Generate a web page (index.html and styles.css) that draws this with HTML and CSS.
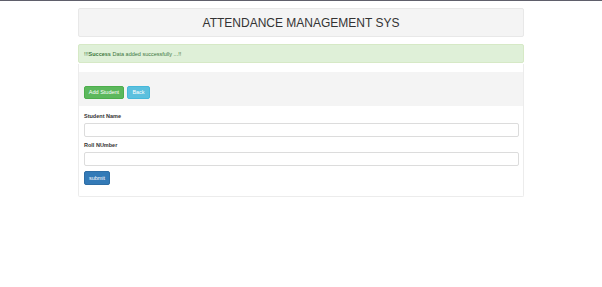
FILE: index.html
```html
<!DOCTYPE html>
<html>
<head>
  <title>Attendance Management System</title>
  <link rel="stylesheet" href="styles.css">
</head>
<body>
  <div class="topline"></div>
  <div class="container">
    <div class="well">
      <h2 class="title">ATTENDANCE MANAGEMENT SYS</h2>
    </div>

    <div class="alert">!!!<strong>Success</strong> Data added successfully ...!!</div>

    <div class="panel">
      <div class="panel-heading">
        <a class="btn btn-success" href="#">Add Student</a>
        <a class="btn btn-info" href="#">Back</a>
      </div>
      <div class="panel-body">
        <form>
          <div class="form-group">
            <label for="name">Student Name</label>
            <input type="text" class="form-control" id="name" name="name">
          </div>
          <div class="form-group">
            <label for="roll">Roll NUmber</label>
            <input type="text" class="form-control" id="roll" name="roll">
          </div>
          <button type="submit" class="btn btn-primary">submit</button>
        </form>
      </div>
    </div>
  </div>
</body>
</html>
```

FILE: styles.css
```css
body {
  font-family: "Liberation Sans", Arial, sans-serif;
  background-color: #fff;
  color: #333;
  margin: 0;
  padding: 0;
}

.topline {
  height: 1px;
  background-color: #5f5f6b;
}

.container {
  width: 446px;
  margin: 0 auto;
}

.well {
  margin-top: 7px;
  height: 27px;
  background-color: #f4f4f4;
  border: 1px solid #e8e8e8;
  border-radius: 2px;
  display: flex;
  align-items: center;
  justify-content: center;
}

.title {
  margin: 0;
  font-size: 12px;
  font-weight: normal;
  color: #333;
}

.alert {
  margin-top: 7px;
  height: 19px;
  box-sizing: border-box;
  padding: 0 5px;
  line-height: 19px;
  font-size: 5.5px;
  color: #3c763d;
  background-color: #dff0d8;
  border: 1px solid #d6e9c6;
  border-radius: 2px;
}

.panel {
  margin-top: 1px;
  border: 1px solid #ececec;
  border-top: none;
  border-radius: 0 0 2px 2px;
  padding-top: 8px;
  height: 124px;
}

.panel-heading {
  background-color: #f4f4f4;
  height: 34px;
  padding: 14px 5px 0;
  box-sizing: border-box;
  display: flex;
  gap: 3px;
}

.panel-body {
  padding: 7px 5px 0;
}

.btn {
  display: block;
  box-sizing: border-box;
  height: 13px;
  line-height: 11px;
  padding: 0;
  white-space: nowrap;
  text-align: center;
  font-family: "Liberation Sans", Arial, sans-serif;
  font-size: 5.5px;
  color: #fff;
  text-decoration: none;
  border: 1px solid transparent;
  border-radius: 2px;
}

.btn-success {
  background-color: #5cb85c;
  border-color: #4cae4c;
  width: 40px;
}

.btn-info {
  background-color: #5bc0de;
  border-color: #46b8da;
  width: 23px;
}

.btn-primary {
  background-color: #337ab7;
  border-color: #2e6da4;
  width: 26px;
  height: 14px;
  line-height: 12px;
}

.form-group {
  margin-bottom: 5px;
}

.form-group label {
  display: block;
  font-size: 5.5px;
  font-weight: bold;
  color: #333;
  margin-bottom: 3px;
  line-height: 7px;
}

.form-control {
  display: block;
  width: 435px;
  height: 14px;
  box-sizing: border-box;
  margin: 0;
  border: 1px solid #dcdcdc;
  border-radius: 2px;
  background-color: #fff;
}
```
